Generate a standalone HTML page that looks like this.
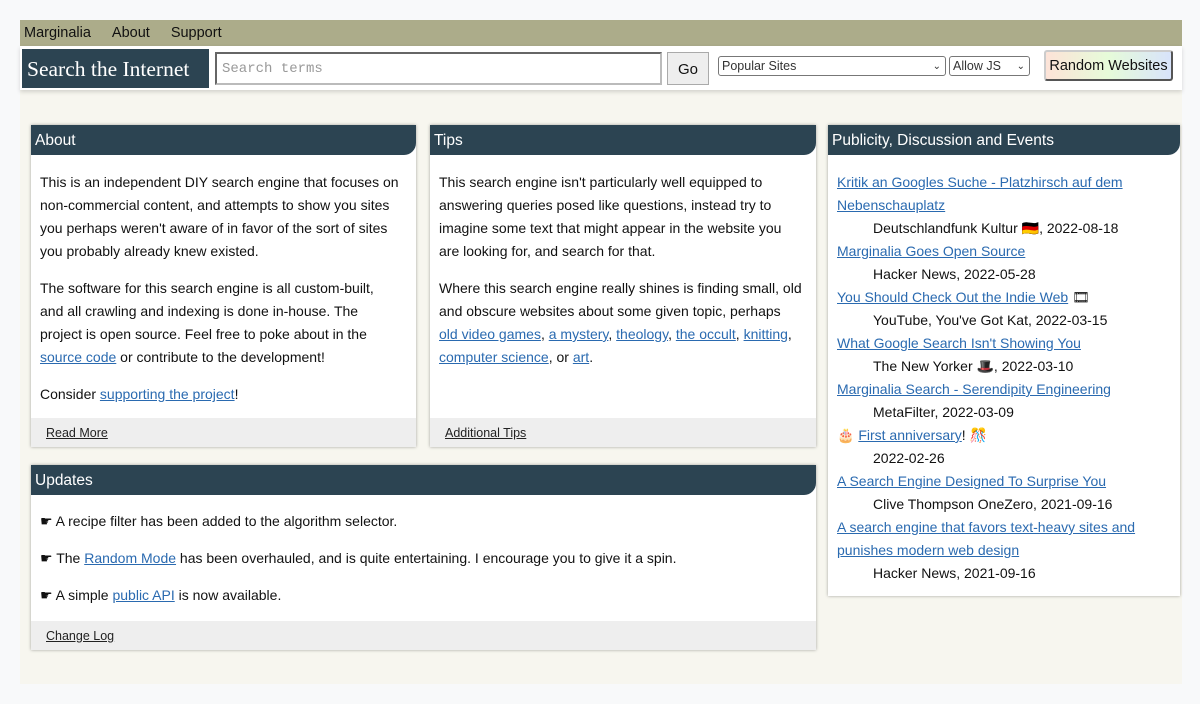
<!DOCTYPE html>
<html><head><meta charset="utf-8"><style>
*{box-sizing:border-box;margin:0;padding:0}
body{width:1200px;height:704px;background:#f8f9fa;font-family:"Liberation Sans","DejaVu Sans",sans-serif;color:#111;position:relative;overflow:hidden}
#wrap{position:absolute;left:20px;top:20px;width:1162px;height:664px;background:#f7f6ef}
#nav{position:absolute;left:0;top:0;width:1162px;height:26px;background:#acac8a;font-size:14.5px;line-height:27px}
#nav span{margin-left:4px;margin-right:17px}
#sb{position:absolute;left:0;top:26px;width:1162px;height:44px;background:#fff;box-shadow:0 2px 4px rgba(0,0,0,.15)}
#title{position:absolute;left:2px;top:3px;width:187px;height:39px;background:#2c4452;color:#fff;font-family:"Liberation Serif",serif;font-size:21.5px;line-height:40px;padding-left:5px;white-space:nowrap}
#q{position:absolute;left:195px;top:6px;width:447px;height:33px;border:2px solid #666;border-right-color:#bbb;border-bottom-color:#bbb;font-family:"Liberation Mono",monospace;font-size:14px;color:#999;line-height:31px;padding-left:5px}
#go{position:absolute;left:647px;top:6px;width:42px;height:33px;background:#eee;border:1px solid #aaa;font-size:15px;text-align:center;line-height:33px}
.sel{position:absolute;top:10px;height:20px;border:1px solid #777;border-radius:3px;font-size:12.5px;line-height:19px;padding-left:3px;color:#333;background:#fff}
.sel i{position:absolute;right:4px;top:0;font-style:normal;font-size:10px}
#rnd{position:absolute;left:1024px;top:4px;width:129px;height:31px;border:2px solid #555;border-top-color:#ccc;border-left-color:#ccc;border-radius:3px;background:linear-gradient(90deg,#fde3d8,#e6fbd9,#d8e3fb);font-size:14.5px;text-align:center;line-height:28px}
.box{position:absolute;background:#fff;box-shadow:0 0 3px rgba(0,0,0,.35)}
.h{height:30px;background:#2c4452;color:#fff;font-size:15.5px;line-height:32px;padding-left:4px;border-bottom-right-radius:12px}
.b{padding:16px 9px 8px;font-size:14px;line-height:23px;white-space:nowrap}
.b p{margin-bottom:14px}
a{color:#2a6ab0;text-decoration:underline}
.f{position:absolute;left:0;bottom:0;width:100%;height:29px;background:#eee;font-size:12.5px;line-height:31px;padding-left:15px}
.f u{color:#222}
.ind{padding-left:36px}
</style></head><body>
<div id="wrap">
<div id="nav"><span>Marginalia</span><span>About</span><span>Support</span></div>
<div id="sb">
<div id="title">Search the Internet</div>
<div id="q">Search terms</div>
<div id="go">Go</div>
<div class="sel" style="left:698px;width:228px">Popular Sites<i>⌄</i></div>
<div class="sel" style="left:929px;width:81px">Allow JS<i>⌄</i></div>
<div id="rnd">Random Websites</div>
</div>

<div class="box" style="left:11px;top:105px;width:385px;height:322px">
<div class="h">About</div>
<div class="b"><p>This is an independent DIY search engine that focuses on<br>non-commercial content, and attempts to show you sites<br>you perhaps weren't aware of in favor of the sort of sites<br>you probably already knew existed.</p>
<p>The software for this search engine is all custom-built,<br>and all crawling and indexing is done in-house. The<br>project is open source. Feel free to poke about in the<br><a>source code</a> or contribute to the development!</p>
<p>Consider <a>supporting the project</a>!</p></div>
<div class="f"><u>Read More</u></div>
</div>

<div class="box" style="left:410px;top:105px;width:386px;height:322px">
<div class="h">Tips</div>
<div class="b"><p>This search engine isn't particularly well equipped to<br>answering queries posed like questions, instead try to<br>imagine some text that might appear in the website you<br>are looking for, and search for that.</p>
<p>Where this search engine really shines is finding small, old<br>and obscure websites about some given topic, perhaps<br><a>old video games</a>, <a>a mystery</a>, <a>theology</a>, <a>the occult</a>, <a>knitting</a>,<br><a>computer science</a>, or <a>art</a>.</p></div>
<div class="f"><u>Additional Tips</u></div>
</div>

<div class="box" style="left:808px;top:105px;width:352px;height:471px">
<div class="h">Publicity, Discussion and Events</div>
<div class="b">
<a>Kritik an Googles Suche - Platzhirsch auf dem</a><br><a>Nebenschauplatz</a><br>
<div class="ind">Deutschlandfunk Kultur 🇩🇪, 2022-08-18</div>
<a>Marginalia Goes Open Source</a>
<div class="ind">Hacker News, 2022-05-28</div>
<a>You Should Check Out the Indie Web</a> 🎞
<div class="ind">YouTube, You've Got Kat, 2022-03-15</div>
<a>What Google Search Isn't Showing You</a>
<div class="ind">The New Yorker 🎩, 2022-03-10</div>
<a>Marginalia Search - Serendipity Engineering</a>
<div class="ind">MetaFilter, 2022-03-09</div>
🎂 <a>First anniversary</a>! 🎊
<div class="ind">2022-02-26</div>
<a>A Search Engine Designed To Surprise You</a>
<div class="ind">Clive Thompson OneZero, 2021-09-16</div>
<a>A search engine that favors text-heavy sites and</a><br><a>punishes modern web design</a>
<div class="ind">Hacker News, 2021-09-16</div>
</div>
</div>

<div class="box" style="left:11px;top:445px;width:785px;height:185px">
<div class="h">Updates</div>
<div class="b" style="padding-top:15px"><p>☛ A recipe filter has been added to the algorithm selector.</p>
<p>☛ The <a>Random Mode</a> has been overhauled, and is quite entertaining. I encourage you to give it a spin.</p>
<p>☛ A simple <a>public API</a> is now available.</p></div>
<div class="f"><u>Change Log</u></div>
</div>
</div>
</body></html>
